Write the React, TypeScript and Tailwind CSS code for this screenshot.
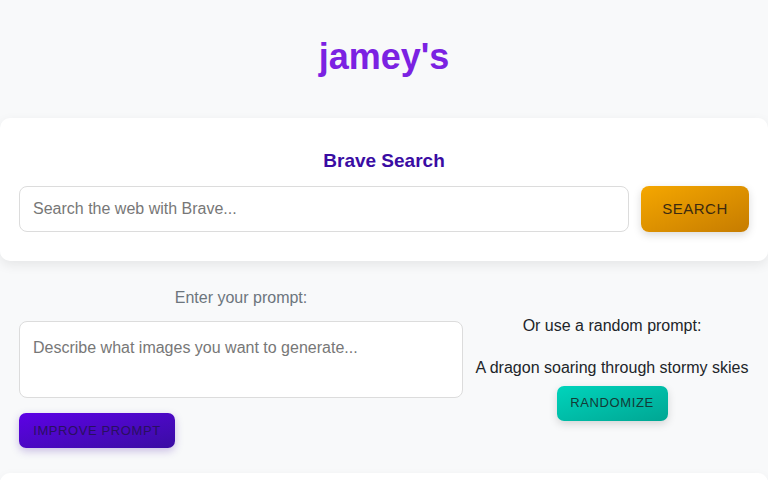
export default function App() {
  return (
    <div
      className="h-[480px] overflow-hidden bg-[#f8f9fa] pt-[37px] text-[#212529]"
      style={{ fontFamily: '"Liberation Sans", Arial, sans-serif' }}
    >
      <h1 className="text-center text-[36px] font-bold leading-[40px] text-[#7b22e2]">jamey's</h1>

      <div className="mt-[41px] rounded-[10px] bg-white px-[19px] pt-[32px] pb-[29px] shadow-[0_4px_12px_rgba(0,0,0,0.08)]">
        <h2 className="text-center text-[19px] font-bold leading-[22px] text-[#3a0ca3]">Brave Search</h2>
        <div className="mt-[14px] flex items-center gap-[12px]">
          <input
            className="h-[46px] flex-1 rounded-[8px] border border-[#dcdcdc] px-[13px] text-[16px] outline-none placeholder:text-[#777]"
            placeholder="Search the web with Brave..."
          />
          <button className="h-[46px] w-[108px] rounded-[8px] bg-gradient-to-br from-[#f5a700] to-[#c67c00] text-[15px] tracking-[0.5px] text-[#3b2a10] shadow-[0_3px_8px_rgba(0,0,0,0.15)]">
            SEARCH
          </button>
        </div>
      </div>

      <div className="mt-[28px] flex gap-[12px] px-[19px]">
        <div className="flex w-[444px] flex-col">
          <label className="text-center text-[16px] leading-[18px] text-[#6c757d]">Enter your prompt:</label>
          <textarea
            className="mt-[14px] h-[77px] resize-none rounded-[8px] border border-[#dcdcdc] bg-white px-[13px] py-[14px] text-[16px] outline-none placeholder:text-[#777]"
            placeholder="Describe what images you want to generate..."
          />
          <div className="mt-[15px]">
            <button className="h-[35px] w-[156px] rounded-[7px] bg-gradient-to-br from-[#5d00e6] to-[#3a0ca3] text-[13px] tracking-[0.6px] text-[#2a1060] shadow-[0_3px_8px_rgba(58,12,163,0.25)]">
              IMPROVE PROMPT
            </button>
          </div>
        </div>
        <div className="flex flex-1 flex-col items-center justify-center">
          <p className="text-[16px] leading-[18px] text-[#212529]">Or use a random prompt:</p>
          <p className="mt-[24px] text-[16px] leading-[18px] text-[#212529]">A dragon soaring through stormy skies</p>
          <button className="mt-[9px] h-[35px] w-[111px] rounded-[7px] bg-gradient-to-br from-[#00d4bc] to-[#00a693] text-[13px] tracking-[0.6px] text-[#133a36] shadow-[0_3px_8px_rgba(0,0,0,0.15)]">
            RANDOMIZE
          </button>
        </div>
      </div>

      <div className="mt-[25px] h-[40px] rounded-t-[10px] bg-white shadow-[0_4px_12px_rgba(0,0,0,0.06)]" />
    </div>
  )
}
